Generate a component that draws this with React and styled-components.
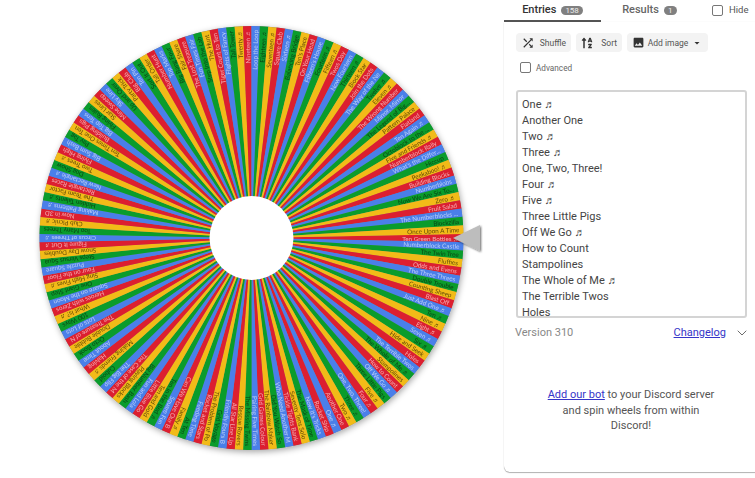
import React from "react";
import styled, { createGlobalStyle } from "styled-components";
import { MdShuffle, MdImage, MdArrowDropDown } from "react-icons/md";
import { FaSortAlphaUp } from "react-icons/fa";
import { ChevronDown } from "lucide-react";

const clockwise = [
  "Ten Green Bottles ♬","Numberblock Castle","The Twin Tree","Fluffies","Odds and Evens","The Three Threes","Double Trouble","Counting Sheep","Blast Off","Just Add One ♬",
  "Ten ♬","Nine ♬","Eight ♬","Seven ♬","Six ♬","Hide and Seek","Holes","The Terrible Twos","The Whole of Me ♬","Stampolines",
  "How to Count","Off We Go ♬","Three Little Pigs","Five ♬","Four ♬","One, Two, Three!","Three ♬","Two ♬","Another One","One ♬",
  "Rocket Ship","Now It's Tricks","The Mask of Time","Seventy Tens Solo","Tickle Tights Bank","Who Need Another M","Did You Watch So","The Rainbow Maker","Grid Games Colour","Pairing Five Times",
  "The Missing Twins","Rescue Rovers","All Star Line Up","Friendly Fours B","Grid Voyage","The Problem of Po","Rocket and Stars","Feeding Time","At Ten","Family ♬",
  "Can We Have Our B","Square Fun","Ten in the Bed ♬","Ten and Gold","Little Blue Go","Fun and Lola","Big Number Bash","Playing Blocks","The Case of the M","The Big Flip",
  "Cuboid","Making Friends ♬","Halving","About Time","Octo Book","Double Bubble","The Treasure of N","Lots of Lots","100 Ways","What Is? ♬",
  "Heroes with Zeros","Square on the Moon","One Giant Step","Sing High Fives ♬","Four on the Floor","Puzzle Square","Steps Versus Squa","Snow Day Doubles","Figure It Out ♬","Circus of Threes ♬",
  "Too Many Threes","Club Picnic ♬","Now in 3D","Making Patterns ♬","Hidden Talents ♬","The Team Factor","Rectangle Races","New Rectangle ♬","Dog Show","Two Trees ♬",
  "Flying High","Big Sum Bash","Pay Tag","Ten Times One Ten","Building Pigs","Big Top Tens","Flying Rules","Star Lines","Mine Sweep","Sky Line",
  "Up and Over","Party Trick","Big Club","Ten Pin","Sort It Out","Tall Order","Number Hunt","Top Marks","Big Bang Four","Fair Share",
  "The Lost Treasure","Fun Times Fair","Step Into the Lab","The Hunt","Tiger Count to Ten","Flights of Fancy","Tall Tower","Twenty ♬","Nineteen ♬","Loop the Loop",
  "Eighteen ♬","Seventeen ♬","Square Club","Sixteen ♬","Balancing Bridge","Ten's Place","On Your Head","Fifteen's House","Fourteen ♬","Fifteen ♬",
  "Twos Day","Now Fourteen","Thirteen ♬","Block Star","Join the Dots","The Way of the Ne","Twelve ♬","Eleven ♬","The Wrong Number","Mirror, Mirror",
  "The Legend of Big Tum","Pattern Palace","Flatland","Ten Again ♬","Octoblock to the Rescue","Five and Friends ♬","Numberblock Rally","What's the Difference","Hiccup","Peekaboo! ♬",
  "Building Blocks","Numberblobs","Now We Are Six To Ten","Zero ♬","Fruit Salad","The Numberblocks Show","Blockzilla","Once Upon A Time",
];

const listed = Array.from({ length: 14 }, (_, k) => clockwise[(29 - k + 158) % 158]);

const CX = 251.5;
const CY = 238;
const R = 212;
const STEP = 360 / 158;
const CYCLE = [
  { bg: "#dc1f30", fg: "#ffffff", ink: 0.62 },
  { bg: "#4a7fe9", fg: "#ffffff", ink: 0.62 },
  { bg: "#0a9c2c", fg: "#0a2a0a", ink: 0.8 },
  { bg: "#f2bb18", fg: "#3a2c00", ink: 0.8 },
];

const tone = (i) => {
  if (i >= 30) return CYCLE[(i - 30) % 4];
  return CYCLE[i % 4];
};

const point = (deg, r) => {
  const a = (deg * Math.PI) / 180;
  return `${(CX + r * Math.cos(a)).toFixed(2)} ${(CY + r * Math.sin(a)).toFixed(2)}`;
};

const clip = (s) => (s.length > 19 ? `${s.slice(0, 17)}...` : s);

const GlobalStyle = createGlobalStyle`
  html, body { margin: 0; padding: 0; background: #fff; overflow: hidden; }
  body { font-family: Roboto, "Liberation Sans", sans-serif; }
`;

const Page = styled.div`
  display: flex;
  width: 755px;
  height: 478px;
  overflow: hidden;
`;

const WheelArea = styled.div`
  flex: 0 0 504px;
  height: 478px;
`;

const WheelSvg = styled.svg`
  display: block;
  width: 504px;
  height: 478px;
  filter: blur(0.5px);
`;

const SliceText = styled.text`
  font-family: Lato, "Open Sans", sans-serif;
  font-size: 6.3px;
  font-weight: 400;
  text-anchor: end;
  dominant-baseline: central;
`;

const Panel = styled.div`
  flex: 0 0 251px;
  display: flex;
  flex-direction: column;
  height: 472px;
`;

const TabBar = styled.div`
  display: flex;
  align-items: flex-start;
  height: 22px;
  flex: none;
`;

const Tab = styled.div`
  flex: 0 0 97px;
  height: 22px;
  box-sizing: border-box;
  display: flex;
  justify-content: center;
  gap: 5px;
  padding-top: 3px;
  font-size: 11px;
  font-weight: 500;
  line-height: 14px;
  color: ${(p) => (p.$active ? "#333" : "#666")};
  border-bottom: 2px solid ${(p) => (p.$active ? "#555" : "transparent")};
`;

const Badge = styled.span`
  align-self: flex-start;
  margin-top: 3px;
  min-width: 5px;
  height: 9px;
  padding: 0 4px;
  border-radius: 5px;
  background: #808080;
  color: #eee;
  font-size: 8px;
  font-weight: 400;
  line-height: 9px;
  text-align: center;
`;

const HideToggle = styled.label`
  margin-left: 14px;
  display: flex;
  align-items: center;
  gap: 6px;
  padding-top: 4px;
  font-size: 9.5px;
  line-height: 12px;
  color: #555;
`;

const Box = styled.span`
  display: block;
  width: 9px;
  height: 9px;
  border: 1px solid #777;
  border-radius: 2px;
  background: #fff;
`;

const Card = styled.div`
  flex: 1;
  display: flex;
  flex-direction: column;
  box-sizing: border-box;
  padding: 11px 9px 0 11px;
  border-radius: 0 0 0 6px;
  box-shadow: 0 1px 1px rgba(0, 0, 0, 0.3), 0 0 1px rgba(0, 0, 0, 0.15);
`;

const Toolbar = styled.div`
  display: flex;
  gap: 5px;
  margin-left: 1px;
`;

const ToolButton = styled.div`
  flex: 0 0 ${(p) => p.$width}px;
  height: 19px;
  box-sizing: border-box;
  display: flex;
  align-items: center;
  justify-content: space-between;
  padding: 0 5px;
  background: #f3f3f3;
  border-radius: 4px;
  font-size: 8.5px;
  font-weight: 400;
  color: #555;
  svg { flex: none; color: #333; }
`;

const AdvancedRow = styled.label`
  display: flex;
  align-items: center;
  gap: 5px;
  margin: 10px 0 0 5px;
  height: 11px;
  font-size: 8.2px;
  color: #666;
`;

const EntryBox = styled.div`
  margin: 17px 0 0 1px;
  width: 231px;
  height: 228px;
  box-sizing: border-box;
  overflow: hidden;
  padding: 5px 4px 0;
  border: 2px solid #d4d4d4;
  border-radius: 3px;
  font-size: 11px;
  line-height: 16px;
  color: #444;
  white-space: nowrap;
`;

const Entry = styled.div`
  height: 16px;
`;

const VersionRow = styled.div`
  display: flex;
  align-items: center;
  height: 16px;
  margin-top: 6px;
  font-size: 11px;
  color: #888;
`;

const VersionText = styled.span`
  flex: 1;
`;

const Link = styled.a`
  color: #3535c8;
  text-decoration: underline;
`;

const Chevron = styled(ChevronDown)`
  margin: 2px -3px 0 8px;
  color: #555;
`;

const DiscordNote = styled.p`
  margin: 47px auto 0;
  width: 170px;
  font-size: 11px;
  line-height: 15.7px;
  color: #555;
  text-align: center;
`;

export default function App() {
  return (
    <Page>
      <GlobalStyle />
      <WheelArea>
        <WheelSvg viewBox="0 0 504 478">
          <defs>
            <filter id="rim" x="-10%" y="-10%" width="120%" height="120%">
              <feDropShadow dx="1" dy="2" stdDeviation="3" floodColor="#000" floodOpacity="0.35" />
            </filter>
            <filter id="pointerShade" x="-30%" y="-30%" width="160%" height="160%">
              <feDropShadow dx="1" dy="1" stdDeviation="1.2" floodColor="#000" floodOpacity="0.6" />
            </filter>
          </defs>
          <circle cx={CX} cy={CY} r={R} fill="#888" filter="url(#rim)" />
          {clockwise.map((name, i) => {
            const a = i * STEP;
            return (
              <path
                key={`s${i}`}
                d={`M ${CX} ${CY} L ${point(a - STEP / 2 - 0.03, R)} A ${R} ${R} 0 0 1 ${point(a + STEP / 2 + 0.03, R)} Z`}
                fill={tone(i).bg}
              />
            );
          })}
          {clockwise.map((name, i) => (
            <SliceText
              key={`t${i}`}
              x={CX + R - 4}
              y={CY}
              fill={tone(i).fg}
              fillOpacity={tone(i).ink}
              transform={`rotate(${(i * STEP).toFixed(3)} ${CX} ${CY})`}
            >
              {clip(name)}
            </SliceText>
          ))}
          <circle cx={CX} cy={CY} r={42} fill="#fff" />
          <polygon points="453,238 480,225 480,251" fill="#bdbdbd" filter="url(#pointerShade)" />
        </WheelSvg>
      </WheelArea>
      <Panel>
        <TabBar>
          <Tab $active>
            Entries <Badge>158</Badge>
          </Tab>
          <Tab>
            Results <Badge>1</Badge>
          </Tab>
          <HideToggle>
            <Box />
            Hide
          </HideToggle>
        </TabBar>
        <Card>
          <Toolbar>
            <ToolButton $width={55}>
              <MdShuffle size={14} />
              Shuffle
            </ToolButton>
            <ToolButton $width={46}>
              <FaSortAlphaUp size={12} />
              Sort
            </ToolButton>
            <ToolButton $width={81}>
              <MdImage size={13} />
              Add image
              <MdArrowDropDown size={12} />
            </ToolButton>
          </Toolbar>
          <AdvancedRow>
            <Box />
            Advanced
          </AdvancedRow>
          <EntryBox>
            {listed.map((name) => (
              <Entry key={name}>{name}</Entry>
            ))}
          </EntryBox>
          <VersionRow>
            <VersionText>Version 310</VersionText>
            <Link href="#changelog">Changelog</Link>
            <Chevron size={16} strokeWidth={1.3} />
          </VersionRow>
          <DiscordNote>
            <Link href="#bot">Add our bot</Link> to your Discord server and spin wheels from within Discord!
          </DiscordNote>
        </Card>
      </Panel>
    </Page>
  );
}
